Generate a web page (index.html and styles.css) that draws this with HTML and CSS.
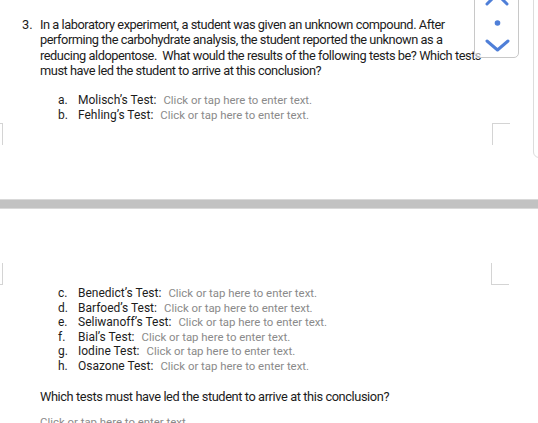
FILE: index.html
```html
<!DOCTYPE html>
<html lang="en">
<head>
    <meta charset="UTF-8">
    <meta name="viewport" content="width=device-width, initial-scale=1.0">
    <title>Carbohydrate Analysis</title>
    <link rel="stylesheet" href="styles.css">
</head>
<body>
    <div class="page page-top">
        <div class="question">
            <span class="qnum">3.</span>
            <p class="qtext">
                <span class="line">In a laboratory experiment, a student was given an unknown compound. After</span>
                <span class="line">performing the carbohydrate analysis, the student reported the unknown as a</span>
                <span class="line">reducing aldopentose.&nbsp; What would the results of the following tests be? Which tests</span>
                <span class="line">must have led the student to arrive at this conclusion?</span>
            </p>
        </div>

        <ol class="tests">
            <li><span class="letter">a.</span><span class="label">Molisch’s Test:</span><span class="hint">Click or tap here to enter text.</span></li>
            <li><span class="letter">b.</span><span class="label">Fehling’s Test:</span><span class="hint">Click or tap here to enter text.</span></li>
        </ol>

        <div class="mark mark-tl"></div>
        <div class="mark mark-tr"></div>
    </div>

    <div class="page-gap"></div>

    <div class="page page-bottom">
        <ol class="tests">
            <li><span class="letter">c.</span><span class="label">Benedict’s Test:</span><span class="hint">Click or tap here to enter text.</span></li>
            <li><span class="letter">d.</span><span class="label">Barfoed’s Test:</span><span class="hint">Click or tap here to enter text.</span></li>
            <li><span class="letter">e.</span><span class="label">Seliwanoff’s Test:</span><span class="hint">Click or tap here to enter text.</span></li>
            <li><span class="letter">f.</span><span class="label">Bial’s Test:</span><span class="hint">Click or tap here to enter text.</span></li>
            <li><span class="letter">g.</span><span class="label">Iodine Test:</span><span class="hint">Click or tap here to enter text.</span></li>
            <li><span class="letter">h.</span><span class="label">Osazone Test:</span><span class="hint">Click or tap here to enter text.</span></li>
        </ol>

        <p class="which">Which tests must have led the student to arrive at this conclusion?</p>
        <p class="answer">Click or tap here to enter text.</p>

        <div class="mark mark-bl"></div>
        <div class="mark mark-br"></div>
    </div>

    <!-- page navigator floating on the right -->
    <div class="nav-box">
        <svg class="nav-icons" width="44" height="58" viewBox="0 0 44 58">
            <polyline points="12,4 22,-6 32,4" fill="none" stroke="#4f7fd8" stroke-width="3" stroke-linecap="round" stroke-linejoin="round"/>
            <circle cx="22.5" cy="23" r="2.8" fill="#4f7fd8"/>
            <polyline points="12,41 22.5,50 33,41" fill="none" stroke="#4f7fd8" stroke-width="3" stroke-linecap="round" stroke-linejoin="round"/>
        </svg>
    </div>
    <div class="side-panel"></div>
</body>
</html>
```

FILE: styles.css
```css
* {
    box-sizing: border-box;
}

html, body {
    margin: 0;
    padding: 0;
    background: #fff;
    overflow: hidden;
}

body {
    width: 538px;
    height: 423px;
    font-family: Roboto, "Noto Sans", sans-serif;
    color: #1c1c1c;
    position: relative;
}

.page {
    position: relative;
    background: #fff;
}

.page-top {
    height: 199px;
    padding-top: 17px;
}

.page-gap {
    height: 10px;
    background: #c2c2c2;
    border-top: 1px solid #d9d9d9;
    border-bottom: 1px solid #d9d9d9;
}

.page-bottom {
    height: 214px;
    padding-top: 77px;
}

.question {
    display: flex;
    font-size: 12.8px;
    line-height: 15.3px;
}

.qnum {
    width: 40px;
    padding-left: 22px;
    flex-shrink: 0;
}

.qtext {
    margin: 0;
}

.line {
    display: block;
    white-space: nowrap;
    letter-spacing: -0.45px;
}

.tests {
    list-style: none;
    margin: 15px 0 0 0;
    padding: 0 0 0 58px;
    font-size: 12px;
    line-height: 14.6px;
}

.page-bottom .tests {
    margin-top: 0;
}

.tests li {
    display: flex;
    align-items: baseline;
    white-space: nowrap;
}

.letter {
    width: 20px;
}

.label {
    margin-right: 7px;
}

.hint,
.answer {
    color: #8a8a8a;
    font-size: 11.4px;
}

.which {
    margin: 15px 0 0 40px;
    font-size: 12.8px;
    line-height: 15.3px;
    letter-spacing: -0.4px;
}

.answer {
    margin: 11px 0 0 40px;
    line-height: 15px;
}

.mark {
    position: absolute;
    width: 18px;
    height: 22px;
    border-color: #d4d4d4;
    border-style: solid;
    border-width: 0;
}

.mark-tl {
    left: -15px;
    top: 123px;
    border-top-width: 1px;
    border-right-width: 1px;
}

.mark-tr {
    left: 492px;
    top: 123px;
    border-top-width: 1px;
    border-left-width: 1px;
}

.mark-bl {
    left: -15px;
    top: 54px;
    border-bottom-width: 1px;
    border-right-width: 1px;
}

.mark-br {
    left: 491px;
    top: 54px;
    border-bottom-width: 1px;
    border-left-width: 1px;
}

.nav-box {
    position: absolute;
    left: 474px;
    top: -6px;
    width: 45px;
    height: 64px;
    border: 1px solid #c8c8c8;
    border-radius: 5px;
    background: rgba(255, 255, 255, 0.6);
}

.nav-icons {
    display: block;
    margin-top: 5px;
    overflow: visible;
}

.side-panel {
    position: absolute;
    left: 533px;
    top: -10px;
    width: 20px;
    height: 168px;
    border: 1px solid #dcdcdc;
    border-radius: 6px;
}
```
